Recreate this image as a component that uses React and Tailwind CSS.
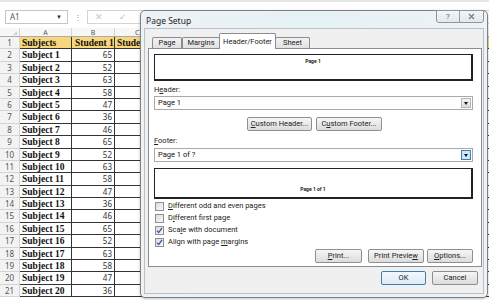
import React from 'react'

const scores = [65, 52, 63, 58, 47, 36, 46, 65, 52, 63, 58, 47, 36, 46, 65, 52, 63, 58, 47, 36]

function Sheet() {
  return (
    <div className="flex flex-col font-['Noto_Sans',sans-serif]">
      {/* formula bar */}
      <div className="h-[28px] flex items-start pt-[8px] bg-white border-t-[2px] border-[#e6e6e6]">
        <div className="ml-[5px] w-[63px] h-[14px] border border-[#c6c6c6] flex items-center justify-between pl-[4px] pr-[5px] text-[8px] text-[#555]">
          <span>A1</span>
          <span className="text-[6px] text-[#333]">▼</span>
        </div>
        <div className="w-[19px] h-[14px] flex items-center justify-center text-[8px] text-[#999]">⋮</div>
        <div className="flex-1 h-[14px] border border-[#d4d4d4] border-r-0 flex items-center text-[9px] text-[#c4c4c4]">
          <span className="ml-[7px]">✕</span>
          <span className="ml-[16px]">✓</span>
        </div>
      </div>
      {/* column headers */}
      <div className="h-[9px] flex text-[7px] leading-[9px] text-[#555] bg-[#f7f7f7] border-b border-[#ababab]">
        <div className="w-[20px] border-r border-[#d4d4d4] flex items-end justify-end pr-[2px] pb-[1px]">
          <div className="w-0 h-0 border-l-[4px] border-l-transparent border-b-[4px] border-b-[#d0d0d0]" />
        </div>
        <div className="w-[52px] text-center border-r border-[#d4d4d4]">A</div>
        <div className="w-[43px] text-center border-r border-[#d4d4d4]">B</div>
        <div className="flex-1 pl-[20px]">C</div>
      </div>
      {/* row 1 */}
      <div className="h-[12.4px] flex font-['Liberation_Serif',serif] font-bold text-[9.5px] leading-[12px] text-[#111]">
        <div className="w-[20px] bg-[#f3f3f3] border-r border-b border-[#d4d4d4] text-center font-['Noto_Sans',sans-serif] font-normal text-[8px] text-[#555]">1</div>
        <div className="w-[52px] bg-[#f8d67c] border-r border-b border-[#333] pl-[2px]">Subjects</div>
        <div className="w-[43px] bg-[#f8d67c] border-r border-b border-[#333] pl-[3px] whitespace-nowrap overflow-hidden">Student 1</div>
        <div className="flex-1 bg-[#f8d67c] border-b border-[#333] pl-[2px]">Student 2</div>
      </div>
      {scores.map((s, i) => (
        <div key={i} className="h-[12.4px] flex leading-[12px]">
          <div className="w-[20px] bg-[#f3f3f3] border-r border-b border-[#d4d4d4] text-center text-[8px] text-[#555]">{i + 2}</div>
          <div className="w-[52px] border-r border-b border-[#333] pl-[2px] font-['Liberation_Serif',serif] font-bold text-[9.5px] text-[#111] whitespace-nowrap">
            Subject {i + 1}
          </div>
          <div className="w-[43px] border-r border-b border-[#333] pr-[2px] text-right text-[8px] text-[#333]">{s}</div>
          <div className="flex-1 border-b border-[#333]" />
        </div>
      ))}
    </div>
  )
}

function Btn({ children, w, primary }) {
  return (
    <div
      className={
        'h-[14px] rounded-[2px] border flex items-center justify-center text-[7.5px] text-[#222] whitespace-nowrap ' +
        (primary
          ? 'border-[#3c7fb1] bg-gradient-to-b from-[#f2f8fd] to-[#dceaf5]'
          : 'border-[#8e8f8f] bg-gradient-to-b from-[#f6f6f6] to-[#dcdcdc]')
      }
      style={{ width: w }}
    >
      {children}
    </div>
  )
}

function Select({ value, active }) {
  return (
    <div className="h-[14px] border border-[#a9a9a9] bg-white flex items-center justify-between pl-[3px] pr-[1px] text-[7.5px] text-[#111]">
      <span>{value}</span>
      <div
        className={
          'w-[10px] h-[10px] border flex items-center justify-center ' +
          (active ? 'border-[#3c7fb1] bg-[#cfe6f8]' : 'border-[#b5b5b5] bg-gradient-to-b from-[#f4f4f4] to-[#dedede]')
        }
      >
        <div className="w-0 h-0 border-l-[2.5px] border-r-[2.5px] border-t-[3px] border-l-transparent border-r-transparent border-t-[#111]" />
      </div>
    </div>
  )
}

function Check({ checked, children }) {
  return (
    <div className="h-[12px] flex items-center">
      <div className="ml-[1px] w-[9px] h-[9px] border border-[#8e8f8f] bg-gradient-to-br from-[#dcdcdc] to-[#f8f8f8] flex items-center justify-center">
        {checked && (
          <svg width="7" height="7" viewBox="0 0 7 7">
            <path d="M1 3.8 L2.7 5.6 L6 1" fill="none" stroke="#3b57a0" strokeWidth="1.3" />
          </svg>
        )}
      </div>
      <span className="ml-[4px] text-[7.5px] text-[#222]">{children}</span>
    </div>
  )
}

function Tab({ children, w, active }) {
  return (
    <div
      className={
        'flex items-center justify-center text-[7.5px] text-[#222] border border-[#898c95] rounded-t-[2px] ' +
        (active
          ? 'h-[16px] bg-white border-b-0 -mx-[1px] relative z-10 -mb-[1px]'
          : 'h-[11px] bg-gradient-to-b from-[#f3f3f3] to-[#e1e1e1] border-b-0')
      }
      style={{ width: w }}
    >
      {children}
    </div>
  )
}

function Dialog() {
  return (
    <div className="absolute left-[140px] top-[10px] w-[348px] h-[288px] rounded-[5px] border border-[#7d8186] bg-gradient-to-r from-[#eef2f5] via-[#e6f2f6] to-[#eef2f5] flex flex-col font-['Roboto',sans-serif] shadow-[0_1px_3px_rgba(0,0,0,0.25)]">
      <div className="h-[17px] flex items-start relative">
        <span className="ml-[5px] mt-[4px] text-[8.5px] leading-[11px] text-[#222] font-['Noto_Sans',sans-serif]">Page Setup</span>
        <div className="absolute right-[3px] -top-[1px] flex h-[13px] border border-[#8f959c] rounded-b-[3px] bg-gradient-to-b from-[#f4f6f8] to-[#e3e8ec]">
          <div className="w-[23px] flex items-center justify-center border-r border-[#9aa0a6] text-[8px] text-[#666]">?</div>
          <div className="w-[23px] flex items-center justify-center">
            <svg width="7" height="7" viewBox="0 0 7 7">
              <path d="M1 1 L6 6 M6 1 L1 6" stroke="#777" strokeWidth="1.1" />
            </svg>
          </div>
        </div>
      </div>
      <div className="flex-1 mx-[3px] mb-[3px] border border-[#b9c1c9] bg-[#f0f0f0] flex flex-col">
        {/* tabs */}
        <div className="h-[19px] flex items-end pl-[7px]">
          <Tab w={30}>Page</Tab>
          <Tab w={38}>Margins</Tab>
          <Tab w={57} active>
            Header/Footer
          </Tab>
          <Tab w={35}>Sheet</Tab>
        </div>
        {/* panel */}
        <div className="ml-[3px] mr-[1px] h-[219px] border border-[#898c95] bg-white pl-[5px] pr-[8px] pt-[5px] flex flex-col">
          <div className="h-[27px] border border-[#222] border-r-2 border-b-2 flex justify-center pt-[3px]">
            <span className="text-[5px] leading-[6px] font-bold text-[#222]">Page 1</span>
          </div>
          <div className="h-[15px] flex items-end pb-[1px] text-[7.5px] leading-[10px] text-[#222]">
            <span>
              H<u>e</u>ader:
            </span>
          </div>
          <Select value="Page 1" />
          <div className="mt-[7px] flex gap-[4px] pl-[93px]">
            <Btn w={65}>
              <u>C</u>ustom Header...
            </Btn>
            <Btn w={66}>
              C<u>u</u>stom Footer...
            </Btn>
          </div>
          <div className="h-[17px] flex items-end pb-[2px] text-[7.5px] leading-[10px] text-[#222]">
            <span>
              <u>F</u>ooter:
            </span>
          </div>
          <Select value="Page 1 of ?" active />
          <div className="mt-[6px] h-[31px] border border-[#222] border-r-2 border-b-2 flex justify-center items-end pb-[5px]">
            <span className="text-[5px] leading-[6px] font-bold text-[#222]">Page 1 of 1</span>
          </div>
          <div className="mt-[1px] flex flex-col">
            <Check>
              <u>D</u>ifferent odd and even pages
            </Check>
            <Check>
              D<u>i</u>fferent first page
            </Check>
            <Check checked>
              Sca<u>l</u>e with document
            </Check>
            <Check checked>
              Align with page <u>m</u>argins
            </Check>
          </div>
          <div className="mt-[1px] flex justify-end">
            <Btn w={47}>
              <u>P</u>rint...
            </Btn>
            <div className="w-[6px]" />
            <Btn w={56}>
              Print Previe<u>w</u>
            </Btn>
            <div className="w-[3px]" />
            <Btn w={46}>
              <u>O</u>ptions...
            </Btn>
          </div>
        </div>
        <div className="mt-[4px] flex justify-end pr-[5px] gap-[6px]">
          <div className="h-[15px]">
            <Btn w={45} primary>
              OK
            </Btn>
          </div>
          <Btn w={46}>Cancel</Btn>
        </div>
      </div>
    </div>
  )
}

export default function App() {
  return (
    <div className="relative w-[489px] h-[300px] overflow-hidden bg-white">
      <Sheet />
      <Dialog />
    </div>
  )
}
